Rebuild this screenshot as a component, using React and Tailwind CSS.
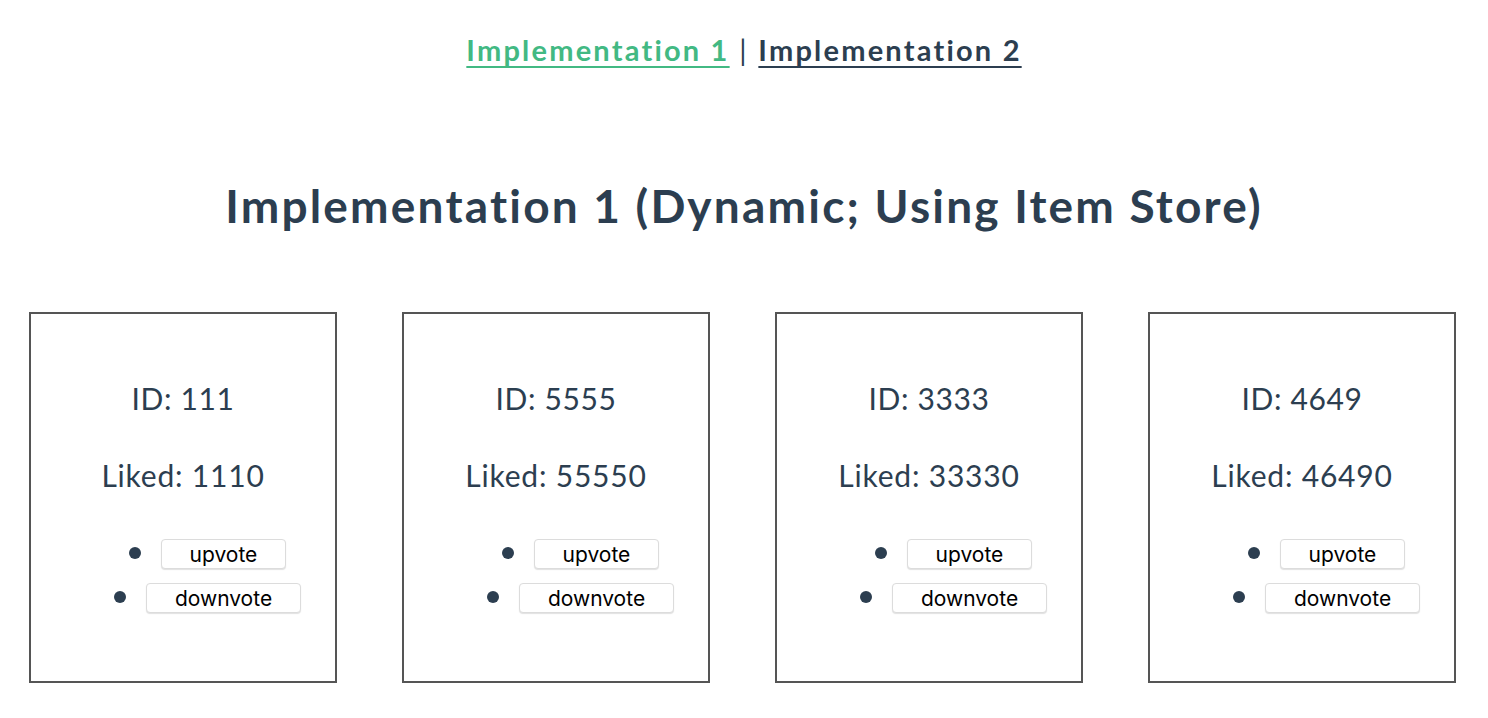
import React from "react";

const items = [
  { id: 111, liked: 1110 },
  { id: 5555, liked: 55550 },
  { id: 3333, liked: 33330 },
  { id: 4649, liked: 46490 },
];

function VoteRow({ label }) {
  return (
    <li className="flex items-center gap-[20px]">
      <span className="mt-[-3px] block h-[12px] w-[12px] rounded-full bg-[#2c3e50]" />
      <button className="h-[30px] rounded-[4px] border border-[#dcdcdc] bg-white px-[28px] font-['Inter',sans-serif] text-[21px] leading-none text-black shadow-[0_1px_1px_rgba(0,0,0,0.12)]">
        {label}
      </button>
    </li>
  );
}

function Card({ id, liked }) {
  return (
    <div className="flex h-[371px] w-[308px] flex-col items-center border-2 border-[#555555]">
      <p className="mt-[66px] text-[30px] leading-[36px] tracking-[0.6px]">ID: {id}</p>
      <p className="mt-[41px] text-[30px] leading-[36px] tracking-[0.8px]">Liked: {liked}</p>
      <ul className="mt-[46px] flex flex-col items-center gap-[14px] pl-[49px]">
        <VoteRow label="upvote" />
        <VoteRow label="downvote" />
      </ul>
    </div>
  );
}

export default function App() {
  return (
    <div className="min-h-screen bg-white font-['Lato',sans-serif] text-[#2c3e50]">
      <nav className="pt-[30px] text-center text-[29px] font-bold leading-[40px] tracking-[2.2px]">
        <a href="#" className="text-[#42b983] underline underline-offset-[5px] decoration-2">
          Implementation 1
        </a>
        <span className="font-normal"> | </span>
        <a href="#" className="text-[#2c3e50] underline underline-offset-[5px] decoration-2">
          Implementation 2
        </a>
      </nav>
      <h1 className="mt-[108px] text-center text-[46px] font-bold leading-[56px] tracking-[2.2px]">
        Implementation 1 (Dynamic; Using Item Store)
      </h1>
      <div className="mt-[78px] flex gap-[65px] px-[29px]">
        {items.map((it) => (
          <Card key={it.id} {...it} />
        ))}
      </div>
    </div>
  );
}
